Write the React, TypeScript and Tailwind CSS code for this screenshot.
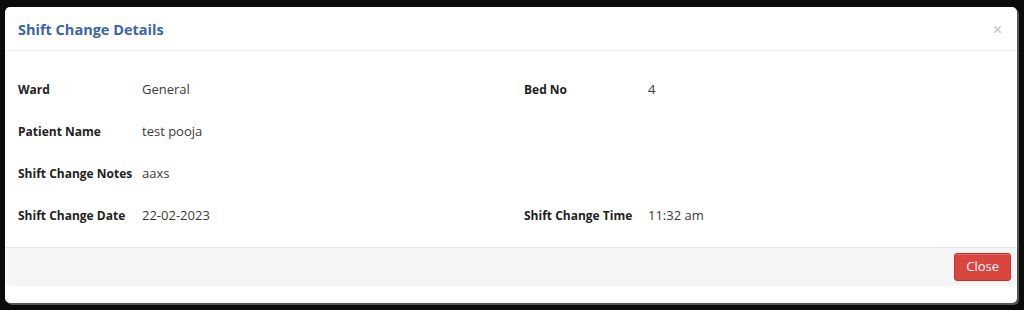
import { X } from "lucide-react";

const font = { fontFamily: '"Open Sans", "Liberation Sans", sans-serif' };

const Field = ({ label, value }: { label: string; value: string }) => (
  <div className="flex h-[42px] items-center px-[13px]">
    <span className="min-w-[121px] mr-[3px] text-[12px] font-bold text-[#222]">
      {label}
    </span>
    <span className="text-[13px] text-[#3a3a3a]">{value}</span>
  </div>
);

export default function App() {
  return (
    <div
      className="w-[1024px] h-[310px] bg-[#0b0b0b] pt-[7px] pl-[5px] pr-[7px] pb-[7px]"
      style={font}
    >
      <div className="w-[1012px] h-[296px] bg-white rounded-[5px] flex flex-col shadow-[2px_2px_0_#555]">
        <div className="h-[44px] flex items-center justify-between px-[13px] pt-[2px] border-b border-[#eeeeee]">
          <h4 className="text-[14.5px] font-bold text-[#3b64a8]">
            Shift Change Details
          </h4>
          <X className="w-[11px] h-[11px] text-[#c4c4c4] mr-[1px]" strokeWidth={3} />
        </div>
        <div className="grid grid-cols-2 pt-[18px] pb-[10px]">
          <Field label="Ward" value="General" />
          <Field label="Bed No" value="4" />
          <Field label="Patient Name" value="test pooja" />
          <div />
          <Field label="Shift Change Notes" value="aaxs" />
          <div />
          <Field label="Shift Change Date" value="22-02-2023" />
          <Field label="Shift Change Time" value="11:32 am" />
        </div>
        <div className="h-[39px] bg-[#f5f5f5] border-t border-[#e5e5e5] rounded-b-[5px] flex items-center justify-end px-[6px]">
          <button className="h-[28px] px-[11px] rounded-[3px] bg-[#d9463f] border border-[#c9302c] text-white text-[13px] shadow-[inset_0_1px_0_rgba(255,255,255,0.2)]">
            Close
          </button>
        </div>
      </div>
    </div>
  );
}
